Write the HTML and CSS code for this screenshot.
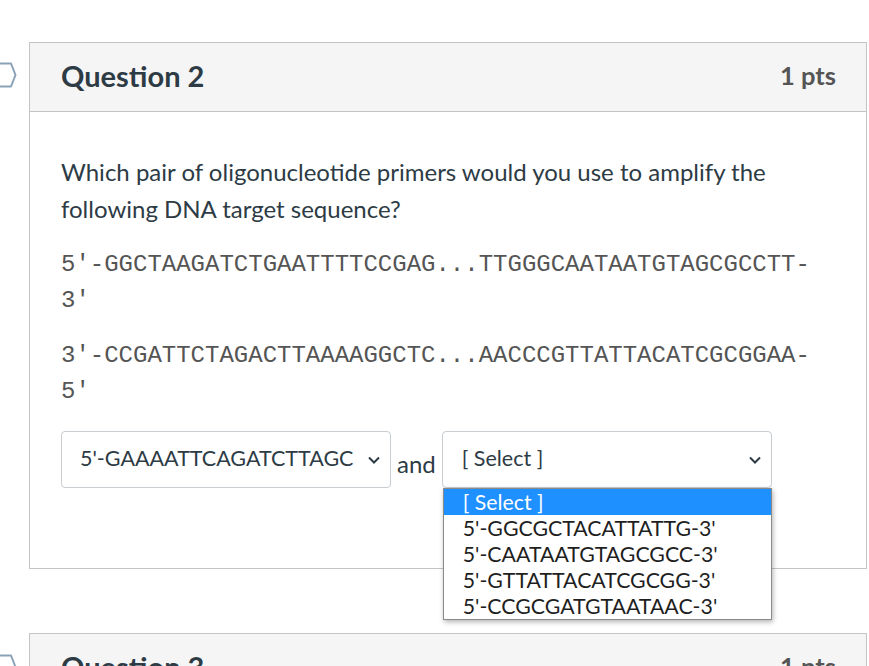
FILE: index.html
```html
<!DOCTYPE html>
<html>
<head>
<meta charset="utf-8">
<link rel="stylesheet" href="styles.css">
</head>
<body>
<div class="page">
  <div class="question">
    <svg class="flag" width="20" height="28" viewBox="0 0 20 28"><polygon points="-6,1.5 11,1.5 15.5,13 11,24.5 -6,24.5" fill="#fff" stroke="#8aa2b8" stroke-width="2" stroke-linejoin="round"/></svg>
    <div class="card">
      <div class="card-header">
        <h2 class="title">Question 2</h2>
        <span class="pts">1 pts</span>
      </div>
      <div class="card-body">
        <p class="prompt">Which pair of oligonucleotide primers would you use to amplify the following DNA target sequence?</p>
        <p class="seq">5'-GGCTAAGATCTGAATTTTCCGAG...TTGGGCAATAATGTAGCGCCTT-3'</p>
        <p class="seq">3'-CCGATTCTAGACTTAAAAGGCTC...AACCCGTTATTACATCGCGGAA-5'</p>
        <div class="answer-row">
          <div class="select">
            <span class="select-value">5'-GAAAATTCAGATCTTAGC</span>
            <svg class="chev" width="14" height="10" viewBox="0 0 14 10"><polyline points="2,2.5 7,7.5 12,2.5" fill="none" stroke="#2d3b45" stroke-width="2"/></svg>
          </div>
          <span class="and">and</span>
          <div class="select select-open">
            <span class="select-value">[ Select ]</span>
            <svg class="chev" width="14" height="10" viewBox="0 0 14 10"><polyline points="2,2.5 7,7.5 12,2.5" fill="none" stroke="#2d3b45" stroke-width="2"/></svg>
            <ul class="dropdown">
              <li class="opt selected">[ Select ]</li>
              <li class="opt">5'-GGCGCTACATTATTG-3'</li>
              <li class="opt">5'-CAATAATGTAGCGCC-3'</li>
              <li class="opt">5'-GTTATTACATCGCGG-3'</li>
              <li class="opt">5'-CCGCGATGTAATAAC-3'</li>
            </ul>
          </div>
        </div>
      </div>
    </div>
  </div>
  <div class="question q3">
    <svg class="flag" width="20" height="28" viewBox="0 0 20 28"><polygon points="-6,1.5 11,1.5 15.5,13 11,24.5 -6,24.5" fill="#fff" stroke="#8aa2b8" stroke-width="2" stroke-linejoin="round"/></svg>
    <div class="card">
      <div class="card-header">
        <h2 class="title">Question 3</h2>
        <span class="pts">1 pts</span>
      </div>
    </div>
  </div>
</div>
</body>
</html>
```
FILE: styles.css
```css
html, body {
  margin: 0;
  padding: 0;
  background: #fff;
  overflow: hidden;
}
body {
  font-family: Lato, "Liberation Sans", sans-serif;
  color: #2d3b45;
}
.page {
  padding: 42px 2px 0 29px;
}
.question {
  position: relative;
}
.flag {
  position: absolute;
  left: -29px;
  top: 20px;
}
.q3 {
  margin-top: 64px;
}
.q3 .flag {
  top: 21px;
}
.card {
  border: 1px solid #c4c4c4;
  background: #fff;
}
.card-header {
  box-sizing: border-box;
  display: flex;
  align-items: center;
  justify-content: space-between;
  height: 69px;
  padding: 0 30px 4px 31px;
  background: #f5f5f5;
  border-bottom: 1px solid #c4c4c4;
}
.title {
  margin: 0;
  font-size: 29px;
  font-weight: 700;
  color: #2d3b45;
}
.pts {
  font-size: 25.5px;
  font-weight: 700;
  color: #555;
}
.card-body {
  padding: 41px 30px 80px 31px;
}
.prompt {
  margin: 0 0 20px;
  font-size: 24px;
  line-height: 37px;
}
.seq {
  margin: 0 0 19px;
  font-family: "Courier New", Courier, "Nimbus Mono PS", "FreeMono", "Liberation Mono", monospace;
  font-size: 24px;
  line-height: 36px;
  color: #555;
}
.answer-row {
  display: flex;
  align-items: center;
  margin-top: 21px;
}
.select {
  position: relative;
  box-sizing: border-box;
  display: flex;
  align-items: center;
  justify-content: space-between;
  width: 330px;
  height: 57px;
  padding: 0 9px 3px 18px;
  border: 1px solid #c7cdd1;
  border-radius: 4px;
  background: #fff;
  font-size: 21.5px;
  color: #2d3b45;
}
.chev {
  margin-top: 3px;
}
.and {
  margin: 8px 6px 0 6px;
  font-size: 24px;
}
.select-open .select-value {
  padding-left: 1px;
}
.dropdown {
  position: absolute;
  left: 0;
  top: 56px;
  width: 329px;
  box-sizing: border-box;
  margin: 0;
  padding: 0;
  list-style: none;
  background: #fff;
  border: 1px solid #8a8a8a;
  box-shadow: 1px 2px 5px rgba(0, 0, 0, 0.3);
  z-index: 5;
}
.opt {
  height: 26px;
  line-height: 26px;
  padding-left: 19px;
  font-size: 21.3px;
  color: #1f1f1f;
}
.opt.selected {
  background: #1e90ff;
  color: #fff;
}
```
